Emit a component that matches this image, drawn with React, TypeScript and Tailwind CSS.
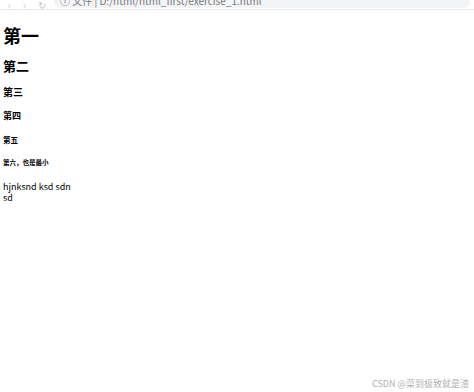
export default function App() {
  const cjk = { fontFamily: '"Microsoft YaHei", "Noto Sans CJK SC", "Noto Sans", sans-serif' };
  return (
    <div className="relative w-[474px] h-[392px] bg-white overflow-hidden" style={cjk}>
      {/* cropped browser bar */}
      <div className="h-[10px] border-b border-[#e6e6e6] flex items-end overflow-hidden">
        <div className="flex items-center gap-[12px] pl-[8px] text-[#c8c8c8] text-[10px] leading-none -mb-[1px]">
          <span>‹</span>
          <span>›</span>
          <span>↻</span>
        </div>
        <div className="ml-[8px] flex-1 h-[8px] self-start bg-[#f3f4f6] rounded-b-[6px] mr-[4px] overflow-hidden">
          <span className="block pl-[6px] text-[10px] leading-[10px] text-[#7a7a7a] whitespace-nowrap -translate-y-[4px]">
            ⓘ 文件 | D:/html/html_first/exercise_1.html
          </span>
        </div>
      </div>

      <div className="flex flex-col pl-[3px] text-black">
        <h1 className="mt-[14px] text-[18px] leading-[22px] font-bold">第一</h1>
        <h2 className="mt-[12px] text-[13px] leading-[16px] font-bold">第二</h2>
        <h3 className="mt-[12px] text-[10px] leading-[12px] font-bold">第三</h3>
        <h4 className="mt-[12px] text-[9px] leading-[11px] font-bold">第四</h4>
        <h5 className="mt-[14px] text-[7.5px] leading-[9px] font-bold">第五</h5>
        <h6 className="mt-[14px] text-[6.5px] leading-[8px] font-bold">第六，也是最小</h6>
        <p className="mt-[15px] text-[9px] leading-[11px]">
          hjnksnd ksd sdn
          <br />
          sd
        </p>
      </div>

      <div className="absolute right-[5px] bottom-[3px] text-[9px] leading-[10px] text-[#b0b0b0]">
        CSDN @菜到极致就是渣
      </div>
    </div>
  );
}
